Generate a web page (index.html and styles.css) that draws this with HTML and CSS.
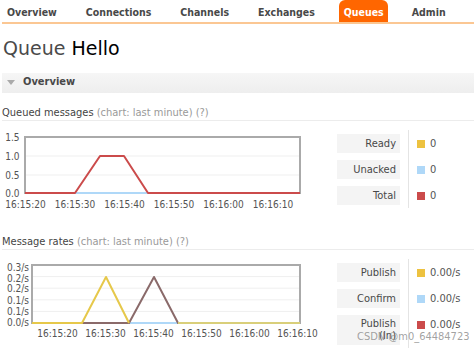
FILE: index.html
```html
<!DOCTYPE html>
<html>
<head>
<meta charset="utf-8">
<link rel="stylesheet" href="styles.css">
</head>
<body>
<nav class="tabs">
  <ul>
    <li>Overview</li>
    <li>Connections</li>
    <li>Channels</li>
    <li>Exchanges</li>
    <li class="active">Queues</li>
    <li>Admin</li>
  </ul>
</nav>
<h1 class="title"><span class="kind">Queue</span> Hello</h1>
<div class="section-bar"><span class="tri"></span>Overview</div>

<h3 class="sub">Queued messages <span class="hint">(chart: last minute) (?)</span></h3>
<div class="chart-row">
  <svg class="chart" width="337" height="84" viewBox="0 0 337 84">
    <g class="grid">
      <line x1="25" y1="28" x2="300" y2="28"/>
      <line x1="25" y1="47" x2="300" y2="47"/>
    </g>
    <rect class="frame" x="25" y="9" width="275" height="56"/>
    <polyline class="s-yellow" points="25,65 300,65"/>
    <polyline class="s-blue" points="25,65 300,65"/>
    <polyline class="s-red" points="25,65 75,65 100,28 124,28 148,65 300,65"/>
    <g class="ylab">
      <text x="19.5" y="13">1.5</text>
      <text x="19.5" y="31.5">1.0</text>
      <text x="19.5" y="50.5">0.5</text>
      <text x="19.5" y="69">0.0</text>
    </g>
    <g class="xlab">
      <text x="25.5" y="80">16:15:20</text>
      <text x="75" y="80">16:15:30</text>
      <text x="124.5" y="80">16:15:40</text>
      <text x="174" y="80">16:15:50</text>
      <text x="223.5" y="80">16:16:00</text>
      <text x="273" y="80">16:16:10</text>
    </g>
  </svg>
  <div class="legend">
    <div class="legend-line"></div>
    <div class="lab">Ready</div><div class="val"><i class="sw c-yellow"></i>0</div>
    <div class="lab">Unacked</div><div class="val"><i class="sw c-blue"></i>0</div>
    <div class="lab">Total</div><div class="val"><i class="sw c-red"></i>0</div>
  </div>
</div>

<h3 class="sub sub2">Message rates <span class="hint">(chart: last minute) (?)</span></h3>
<div class="chart-row chart-row2">
  <svg class="chart" width="337" height="84" viewBox="0 0 337 84">
    <g class="grid">
      <line x1="32" y1="18.6" x2="300" y2="18.6"/>
      <line x1="32" y1="30.2" x2="300" y2="30.2"/>
      <line x1="32" y1="41.8" x2="300" y2="41.8"/>
      <line x1="32" y1="53.4" x2="300" y2="53.4"/>
    </g>
    <rect class="frame" x="32" y="7" width="268" height="58"/>
    <polyline class="s-blue" points="32,65 300,65"/>
    <polyline class="s-brown" points="32,65 129,65 154,19 178,65 300,65"/>
    <polyline class="s-yellow2" points="32,65 82,65 106,19 129,65"/>
    <polyline class="s-flat" points="178,65 300,65"/>
    <g class="ylab">
      <text x="29" y="12.5">0.3/s</text>
      <text x="29" y="23.5">0.2/s</text>
      <text x="29" y="34">0.2/s</text>
      <text x="29" y="45.5">0.1/s</text>
      <text x="29" y="57">0.1/s</text>
      <text x="29" y="68">0.0/s</text>
    </g>
    <g class="xlab">
      <text x="57.5" y="79">16:15:20</text>
      <text x="105.5" y="79">16:15:30</text>
      <text x="153.5" y="79">16:15:40</text>
      <text x="201.5" y="79">16:15:50</text>
      <text x="249.5" y="79">16:16:00</text>
      <text x="297.5" y="79">16:16:10</text>
    </g>
  </svg>
  <div class="legend">
    <div class="legend-line"></div>
    <div class="lab">Publish</div><div class="val"><i class="sw c-yellow"></i>0.00/s</div>
    <div class="lab">Confirm</div><div class="val"><i class="sw c-blue"></i>0.00/s</div>
    <div class="lab lab2">Publish<br>(In)</div><div class="val"><i class="sw c-red"></i>0.00/s</div>
  </div>
</div>
<div class="watermark">CSDN @m0_64484723</div>
</body>
</html>
```
FILE: styles.css
```css
html, body {
  margin: 0;
  padding: 0;
  background: #fff;
  width: 474px;
  height: 349px;
  overflow: hidden;
}
body {
  font-family: "DejaVu Sans Condensed", "DejaVu Sans", sans-serif;
  font-stretch: condensed;
  font-size: 11px;
  color: #444;
  position: relative;
}
.tabs ul {
  list-style: none;
  margin: 0 0 0 2px;
  padding: 0;
  display: flex;
  gap: 19px;
  border-bottom: 2px solid #fbc793;
  height: 22px;
}
.tabs li {
  padding: 3px 5px 0 5px;
  line-height: 19px;
  font-size: 10.5px;
  font-weight: bold;
  color: #484848;
  border-radius: 6px 6px 0 0;
}
.tabs li.active {
  background: #ff6600;
  color: #fff;
  padding-right: 4px;
}
.title {
  margin: 12px 0 0 3px;
  font-family: "DejaVu Sans", sans-serif;
  font-stretch: normal;
  font-size: 19px;
  line-height: 24px;
  font-weight: normal;
  color: #000;
}
.title .kind { color: #4a4a4a; }
.section-bar {
  margin: 13px 0 0 2px;
  height: 17px;
  padding-bottom: 3px;
  line-height: 17px;
  background: linear-gradient(#f6f6f6, #eeeeee);
  font-weight: bold;
  color: #484848;
  display: flex;
  align-items: center;
}
.tri {
  width: 0;
  height: 0;
  border-left: 4px solid transparent;
  border-right: 4px solid transparent;
  border-top: 5px solid #aaa;
  margin: 2px 8px 0 5px;
}
.sub {
  margin: 13px 0 0 2px;
  font-size: 11px;
  line-height: 14px;
  font-weight: normal;
  color: #444;
  border-bottom: 1px solid #ececec;
}
.hint { color: #999; }
.sub2 { margin-top: 23px; }
.chart-row {
  display: flex;
  align-items: flex-start;
}
.chart {
  display: block;
  margin-top: 7px;
  flex: none;
}
.chart-row2 .chart { margin-top: 8px; }
.grid line { stroke: #efefef; stroke-width: 1; }
.frame { fill: none; stroke: #aaa; stroke-width: 2; }
polyline { fill: none; stroke-width: 2; stroke-linejoin: round; }
.s-yellow { stroke: #edc240; }
.s-yellow2 { stroke: #e6c84a; }
.s-flat { stroke: #d9cf7a; }
.s-blue { stroke: #afd8f8; }
.s-red { stroke: #cb4b4b; }
.s-brown { stroke: #8a6a6a; }
.chart text {
  font-family: "DejaVu Sans", sans-serif;
  font-size: 10px;
  fill: #545454;
}
.ylab text { text-anchor: end; }
.xlab text { text-anchor: middle; }
.legend {
  margin-top: 13px;
  display: grid;
  grid-template-columns: 63px 1px auto;
  column-gap: 8px;
  row-gap: 7px;
}
.legend-line {
  grid-column: 2;
  grid-row: 1 / 4;
  background: #e4e4e4;
  margin: -4px 0 -3px 0;
}
.lab {
  grid-column: 1;
  background: #f4f4f4;
  text-align: right;
  padding-right: 4px;
  height: 19px;
  line-height: 19px;
  color: #484848;
}
.lab2 {
  height: 30px;
  line-height: 12px;
  padding-top: 3px;
  box-sizing: border-box;
}
.val {
  grid-column: 3;
  display: flex;
  align-items: center;
  height: 19px;
  color: #555;
}
.sw {
  width: 8px;
  height: 8px;
  margin-right: 5px;
  flex: none;
}
.c-yellow { background: #edc240; }
.c-blue { background: #afd8f8; }
.c-red { background: #cb4b4b; }
.watermark {
  position: absolute;
  left: 357px;
  top: 330px;
  font-size: 11px;
  color: rgba(120, 120, 120, 0.7);
  white-space: nowrap;
}
```
